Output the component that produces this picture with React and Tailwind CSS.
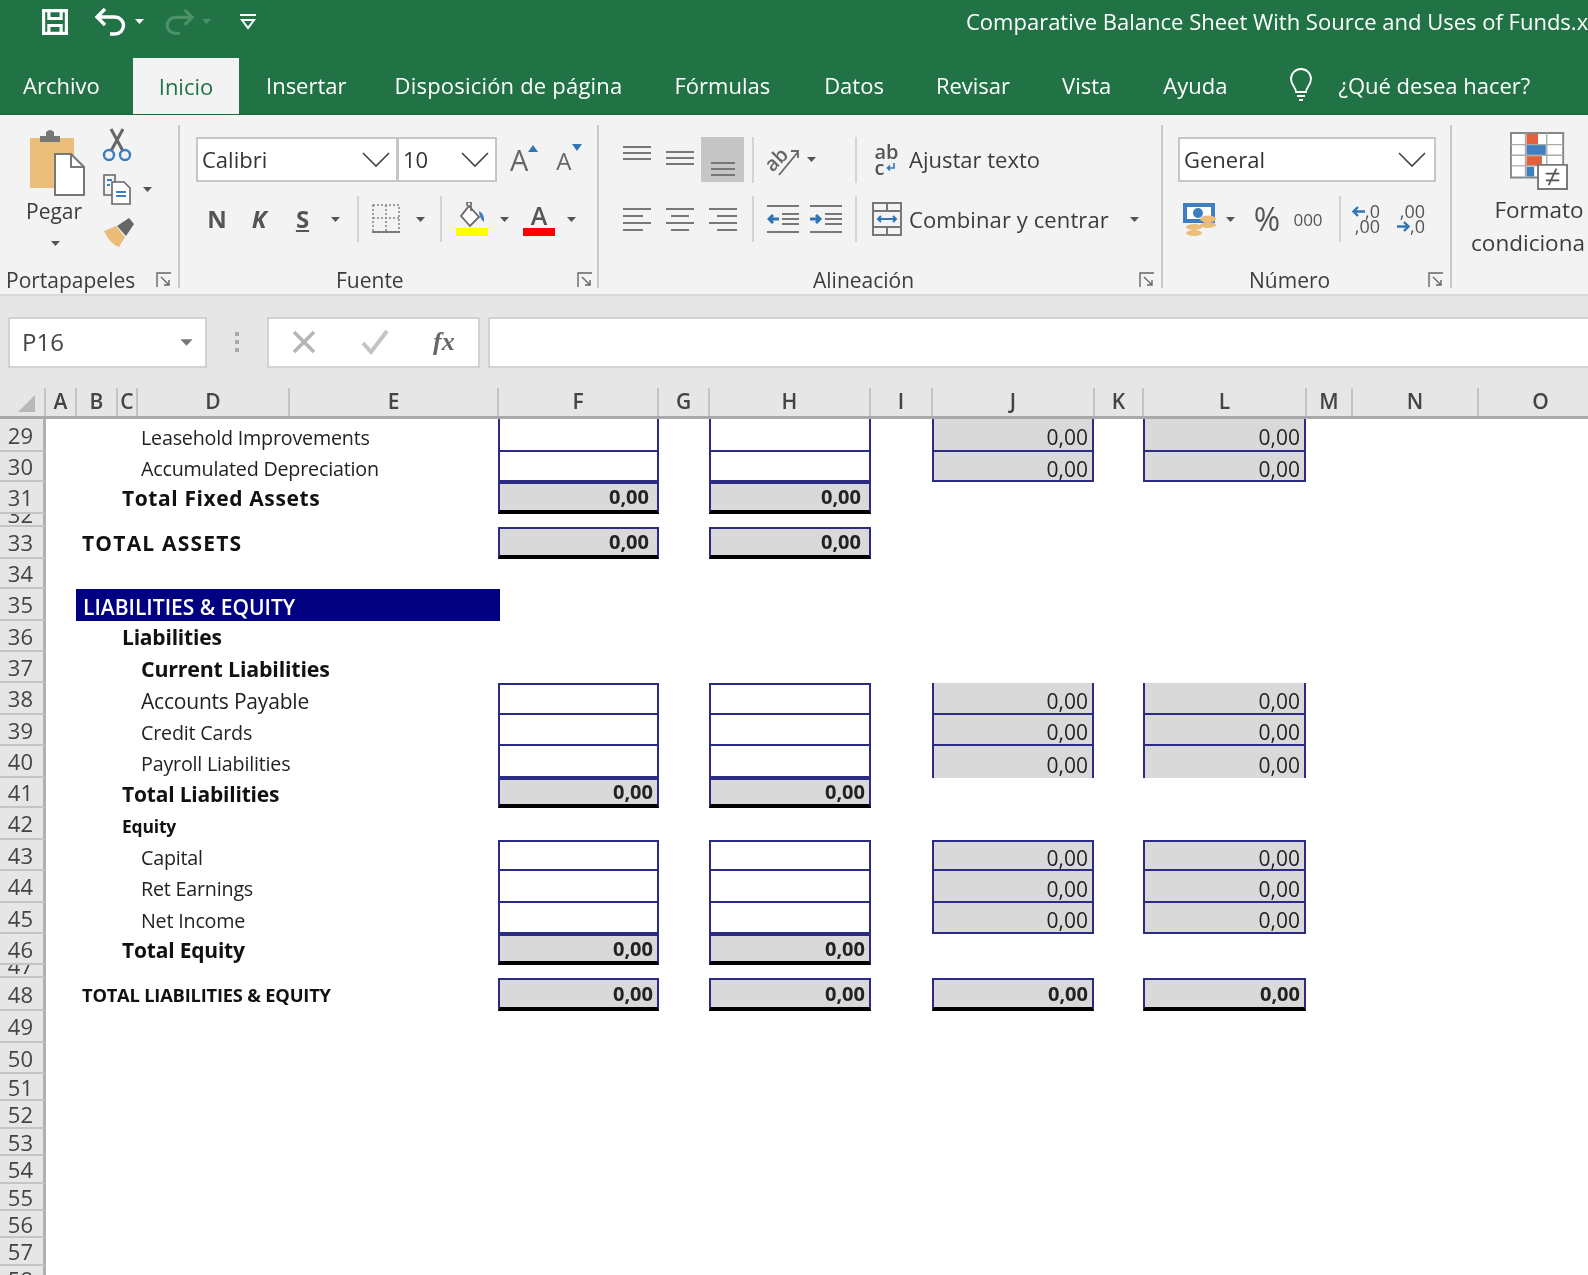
import React from 'react';

const Caret = ({ c = '#555', w = 11, h = 7 }) => (
  <svg width={w} height={h} viewBox="0 0 11 7" preserveAspectRatio="none"><path d="M1 1h9L5.5 6z" fill={c} /></svg>
);
const Chevron = () => (
  <svg width="28" height="16" viewBox="0 0 28 16" fill="none" stroke="#444" strokeWidth="1.6"><path d="M1 1l13 13L27 1" /></svg>
);
const Launcher = () => (
  <svg width="16" height="16" viewBox="0 0 16 16" fill="none" stroke="#666" strokeWidth="1.4">
    <path d="M15 1H1v14" /><path d="M5 5l8 8M13 8v5H8" />
  </svg>
);
const Sep = ({ h = 'h-[46px]' }) => <div className={`w-[2px] bg-[#d4d4d4] ${h}`} />;
const Slot = ({ w, children }) => <div className={`flex justify-center items-center shrink-0 ${w}`}>{children}</div>;

const Lines = ({ rows }) => (
  <svg width="30" height="34" viewBox="0 0 30 34" stroke="#777" strokeWidth="2">
    {rows.map(([x1, x2, y]) => <path key={y} d={`M${x1} ${y}H${x2}`} />)}
  </svg>
);

const PasteIcon = () => (
  <svg width="60" height="68" viewBox="0 0 60 68">
    <path d="M4 10h44v50H4z" fill="#eabd78" />
    <path d="M14 14v-6h6V4q4-4 8 0v4h6v6z" fill="#777" />
    <path d="M29 26h16l13 13v28H29z" fill="#fff" stroke="#777" strokeWidth="2" />
    <path d="M45 26v13h13" fill="none" stroke="#777" strokeWidth="2" />
  </svg>
);
const ScissorsIcon = () => (
  <svg width="30" height="34" viewBox="0 0 30 34" fill="none">
    <path d="M9 1l12 22M21 1L9 23" stroke="#666" strokeWidth="3" />
    <circle cx="7" cy="27" r="5" stroke="#3f7fc0" strokeWidth="2.4" />
    <circle cx="23" cy="27" r="5" stroke="#3f7fc0" strokeWidth="2.4" />
  </svg>
);
const CopyIcon = () => (
  <svg width="30" height="32" viewBox="0 0 30 32" fill="none" stroke="#666" strokeWidth="1.6">
    <path d="M2 2h11v20H2z" fill="#f3f3f3" />
    <path d="M10 9h12l6 6v16H10z" fill="#fff" />
    <path d="M5 7h5M5 12h3M14 19h10M14 23h10" stroke="#3f7fc0" strokeWidth="2" />
  </svg>
);
const BrushIcon = () => (
  <svg width="34" height="32" viewBox="0 0 34 32">
    <path d="M2 15l12-5 9 11-6 10q-9-3-15-16z" fill="#e9bd78" />
    <path d="M15 10l12-8 5 6-8 12z" fill="#666" />
  </svg>
);
const BordersIcon = () => (
  <svg width="28" height="30" viewBox="0 0 28 30" fill="none" stroke="#888" strokeWidth="1.6" strokeDasharray="2 2">
    <path d="M1 1h26v27H1zM14 1v27M1 14h26" />
    <path d="M0 28h28" strokeDasharray="none" stroke="#666" />
  </svg>
);
const FillIcon = () => (
  <div className="flex flex-col items-center w-[32px]">
    <svg width="30" height="26" viewBox="0 0 30 26" fill="none">
      <path d="M12 4l10 11-9 9-9-10z" fill="#fff" stroke="#666" strokeWidth="1.8" />
      <path d="M10 4V0h4v9" stroke="#666" strokeWidth="1.6" />
      <path d="M22 9q6 3 5 11-5-4-5-11z" fill="#3f7fc0" />
    </svg>
    <div className="h-[8px] w-[32px] bg-[#ffff00]" />
  </div>
);
const ColorIcon = () => (
  <div className="flex flex-col items-center w-[32px]">
    <span className="text-[25px] leading-[26px] font-semibold text-[#555]">A</span>
    <div className="h-[8px] w-[32px] bg-[#ff0000]" />
  </div>
);
const OrientIcon = () => (
  <svg width="38" height="36" viewBox="0 0 38 36" fill="none">
    <text x="-1" y="24" fontSize="20" fontFamily="Open Sans" fontWeight="600" fill="#666" transform="rotate(-45 12 16)">ab</text>
    <path d="M15 33L34 10M27 9h7v7" stroke="#666" strokeWidth="1.8" />
  </svg>
);
const Indent = ({ out }) => (
  <svg width="32" height="30" viewBox="0 0 32 30" fill="none">
    <path d="M0 2h32M0 28h32M15 10h17M15 15h17M15 20h17" stroke="#777" strokeWidth="2" />
    {out
      ? <path d="M12 15H2m4-4l-4 4 4 4" stroke="#2f75b5" strokeWidth="3" />
      : <path d="M0 15h10m-4-4l4 4-4 4" stroke="#2f75b5" strokeWidth="3" />}
  </svg>
);
const MergeIcon = () => (
  <svg width="30" height="34" viewBox="0 0 30 34" fill="none" stroke="#777" strokeWidth="2">
    <path d="M1 1h28v32H1zM1 9h28M1 25h28M15 1v8M15 25v8" />
    <path d="M6 17h18" stroke="#2f75b5" />
    <path d="M9 14l-3 3 3 3M21 14l3 3-3 3" stroke="#2f75b5" />
  </svg>
);
const MoneyIcon = () => (
  <svg width="36" height="34" viewBox="0 0 36 34">
    <path d="M1 1h32v20H1z" fill="#3f7fc0" />
    <path d="M5 5h24v12H5z" fill="#fff" />
    <circle cx="16" cy="11" r="5" fill="#3f7fc0" />
    <ellipse cx="26" cy="17" rx="8" ry="3.5" fill="#eabd78" />
    <ellipse cx="26" cy="23" rx="8" ry="3" fill="#eabd78" />
    <ellipse cx="12" cy="25" rx="8" ry="3" fill="#eabd78" />
    <ellipse cx="12" cy="31" rx="8" ry="3" fill="#eabd78" />
  </svg>
);
const CondIcon = () => (
  <svg width="58" height="58" viewBox="0 0 60 60">
    <path d="M1 1h54v46H1z" fill="#fff" stroke="#888" strokeWidth="2" />
    <path d="M17 2h12v11H17z" fill="#e2603a" />
    <path d="M17 13h20v11H17z" fill="#3f7fc0" />
    <path d="M17 25h16v10H17z" fill="#e2603a" />
    <path d="M17 36h8v10H17z" fill="#3f7fc0" />
    <path d="M1 13h54M1 24h54M1 35h54M16 1v46M38 1v46" stroke="#aaa" strokeWidth="1.4" fill="none" />
    <path d="M29 34h30v25H29z" fill="#fff" stroke="#777" strokeWidth="2" />
    <path d="M37 43h14M37 50h14M48 38l-8 17" stroke="#555" strokeWidth="1.8" fill="none" />
  </svg>
);
const ArrowLeft = () => (
  <svg width="13" height="11" viewBox="0 0 13 11" fill="none" stroke="#2f75b5" strokeWidth="2.4"><path d="M13 5.5H2M6 1L1.5 5.5 6 10" /></svg>
);
const ArrowRight = () => (
  <svg width="13" height="11" viewBox="0 0 13 11" fill="none" stroke="#2f75b5" strokeWidth="2.4"><path d="M0 5.5h11M7 1l4.500 4.500L7 10" /></svg>
);

const TABS = [
  ['Insertar', 'pl-[27px] pr-[22px]'],
  ['Disposición de página', 'px-[26px] tracking-[0.2px]'],
  ['Fórmulas', 'pl-[26px] pr-[28px]'],
  ['Datos', 'px-[26px]'],
  ['Revisar', 'px-[26px]'],
  ['Vista', 'px-[26px]'],
  ['Ayuda', 'px-[26px]'],
];

const Field = ({ w, label, pr = 'pr-[6px]' }) => (
  <div className={`flex items-center justify-between bg-white border-2 border-[#c6c6c6] h-[45px] pl-[4px] text-[22px] text-[#333] ${w} ${pr}`}>
    <span>{label}</span>
    <Chevron />
  </div>
);

function GroupSep() {
  return <div className="w-[2px] shrink-0 h-[163px] mt-[10px] bg-[#c8c8c8]" />;
}

function GroupLabel({ text, cls }) {
  return (
    <div className={`flex items-center justify-between h-[28px] ${cls}`}>
      <span className="text-[21px] leading-none">{text}</span>
      <Launcher />
    </div>
  );
}

const Ribbon = () => (
  <div className="flex h-[181px] bg-[#f3f3f3] border-b-2 border-[#d8d8d8] text-[#3c3c3c] text-[21px]">
    {/* Portapapeles */}
    <div className="w-[178px] shrink-0 flex flex-col pt-[13px]">
      <div className="flex h-[137px]">
        <div className="w-[102px] pl-[26px] flex flex-col items-start">
          <PasteIcon />
          <span className="leading-[28px] mt-[1px]">Pegar</span>
          <div className="ml-[24px] mt-[15px]"><Caret /></div>
        </div>
        <div className="flex flex-col gap-[11px] items-start">
          <ScissorsIcon />
          <div className="flex items-center gap-[10px]"><CopyIcon /><Caret /></div>
          <BrushIcon />
        </div>
      </div>
      <GroupLabel cls="mt-auto pl-[6px] pr-[6px]" text="Portapapeles" />
    </div>
    <GroupSep />
    {/* Fuente */}
    <div className="w-[417px] shrink-0 flex flex-col pt-[22px]">
      <div className="flex items-center pl-[16px]">
        <Field w="w-[202px]" label="Calibri" />
        <Field w="w-[100px] -ml-[1px]" label="10" />
        <div className="ml-[13px] flex items-start">
          <span className="text-[29px] leading-[36px] font-medium text-[#666]">A</span>
          <svg width="10" height="7" viewBox="0 0 10 7" className="mt-[3px]"><path d="M0 7h10L5 0z" fill="#2f75b5" /></svg>
        </div>
        <div className="ml-[18px] flex items-start">
          <span className="text-[24px] leading-[36px] font-medium text-[#666] mt-[2px]">A</span>
          <svg width="10" height="7" viewBox="0 0 10 7" className="mt-[3px]"><path d="M0 0h10L5 7z" fill="#2f75b5" /></svg>
        </div>
      </div>
      <div className="flex items-center pl-[16px] mt-[14px] h-[46px] text-[24px] font-bold text-[#555]">
        <Slot w="w-[42px]">N</Slot>
        <Slot w="w-[42px]"><i>K</i></Slot>
        <Slot w="w-[45px]"><u>S</u></Slot>
        <Slot w="w-[20px]"><Caret /></Slot>
        <Slot w="w-[26px]"><Sep /></Slot>
        <Slot w="w-[30px]"><BordersIcon /></Slot>
        <Slot w="w-[38px]"><Caret /></Slot>
        <Slot w="w-[4px]"><Sep /></Slot>
        <Slot w="ml-[8px] w-[41px]"><FillIcon /></Slot>
        <Slot w="w-[24px]"><Caret /></Slot>
        <Slot w="w-[46px]"><ColorIcon /></Slot>
        <Slot w="w-[18px]"><Caret /></Slot>
      </div>
      <GroupLabel cls="mt-auto pl-[156px] pr-[4px]" text="Fuente" />
    </div>
    <GroupSep />
    {/* Alineacion */}
    <div className="w-[562px] shrink-0 flex flex-col pt-[22px]">
      <div className="flex items-center h-[45px] pl-[16px]">
        <Slot w="w-[43px]"><Lines rows={[[1, 29, 4], [1, 29, 10], [1, 29, 16]]} /></Slot>
        <Slot w="w-[43px]"><Lines rows={[[1, 29, 9], [1, 29, 15], [1, 29, 21]]} /></Slot>
        <Slot w="w-[43px] h-[45px] bg-[#c6c6c6]"><Lines rows={[[3, 27, 20], [3, 27, 26], [3, 27, 32]]} /></Slot>
        <Slot w="w-[18px]"><Sep /></Slot>
        <Slot w="w-[42px]"><OrientIcon /></Slot>
        <Slot w="w-[14px]"><Caret /></Slot>
        <Slot w="ml-[31px] w-[14px]"><Sep /></Slot>
        <Slot w="ml-[8px] w-[31px]">
          <div className="flex flex-col items-start text-[#555] text-[20px] leading-[16px] font-semibold">
            <span>ab</span>
            <div className="flex items-center gap-[2px]">
              <span>c</span>
              <svg width="10" height="9" viewBox="0 0 10 9" fill="none" stroke="#2f75b5" strokeWidth="1.6"><path d="M8 0v5H2M4 2.500L1.500 5 4 7.500" /></svg>
            </div>
          </div>
        </Slot>
        <span className="ml-[7px] text-[22px]">Ajustar texto</span>
      </div>
      <div className="flex items-center h-[46px] pl-[16px] mt-[14px]">
        <Slot w="w-[43px]"><Lines rows={[[1, 29, 7], [1, 21, 14], [1, 29, 21], [1, 21, 28]]} /></Slot>
        <Slot w="w-[43px]"><Lines rows={[[1, 29, 7], [6, 24, 14], [1, 29, 21], [6, 24, 28]]} /></Slot>
        <Slot w="w-[43px]"><Lines rows={[[1, 29, 7], [9, 29, 14], [1, 29, 21], [9, 29, 28]]} /></Slot>
        <Slot w="w-[18px]"><Sep /></Slot>
        <Slot w="w-[42px]"><Indent out /></Slot>
        <Slot w="w-[44px]"><Indent /></Slot>
        <Slot w="w-[16px]"><Sep /></Slot>
        <Slot w="ml-[7px] w-[31px]"><MergeIcon /></Slot>
        <span className="ml-[7px] text-[22px] tracking-[0.1px]">Combinar y centrar</span>
        <div className="ml-[20px]"><Caret /></div>
      </div>
      <GroupLabel cls="mt-auto pl-[214px] pr-[6px]" text="Alineación" />
    </div>
    <GroupSep />
    {/* Numero */}
    <div className="w-[287px] shrink-0 flex flex-col pt-[22px]">
      <div className="pl-[15px]"><Field w="w-[258px]" label="General" pr="pr-[8px]" /></div>
      <div className="flex items-center h-[46px] mt-[14px] pl-[18px] text-[#555]">
        <Slot w="w-[38px]"><MoneyIcon /></Slot>
        <Slot w="w-[18px] ml-[2px]"><Caret /></Slot>
        <Slot w="ml-[8px] w-[40px]"><span className="text-[32px] leading-none">%</span></Slot>
        <Slot w="w-[42px]"><span className="text-[17px] leading-none">000</span></Slot>
        <Slot w="w-[22px]"><Sep /></Slot>
        <Slot w="-ml-[4px] w-[38px]">
          <div className="text-[18px] leading-[15px] font-medium text-right">
            <div className="flex items-center justify-end"><ArrowLeft /><span>,0</span></div>
            <div>,00</div>
          </div>
        </Slot>
        <Slot w="ml-[3px] w-[46px]">
          <div className="text-[18px] leading-[15px] font-medium text-right">
            <div>,00</div>
            <div className="flex items-center justify-end"><ArrowRight /><span>,0</span></div>
          </div>
        </Slot>
      </div>
      <GroupLabel cls="mt-auto pl-[86px] pr-[6px]" text="Número" />
    </div>
    <GroupSep />
    {/* Formato */}
    <div className="flex-1 min-w-0 flex flex-col items-center pl-[38px] pt-[17px] overflow-hidden whitespace-nowrap leading-[33px] text-[22.5px]">
      <CondIcon />
      <span className="mt-[3px]">Formato</span>
      <span className="mr-[22px]">condiciona</span>
    </div>
  </div>
);

const FormulaBar = () => (
  <div className="flex items-center h-[92px] bg-[#e6e6e6]">
    <div className="ml-[8px] w-[199px] h-[51px] flex items-center justify-between bg-white border-2 border-[#d2d2d2] pl-[12px] pr-[11px] text-[24px] text-[#444]">
      <span>P16</span>
      <Caret c="#777" w={15} h={9} />
    </div>
    <div className="w-[60px] flex flex-col items-center gap-[4px]">
      <div className="w-[4px] h-[4px] bg-[#aaa]" />
      <div className="w-[4px] h-[4px] bg-[#aaa]" />
      <div className="w-[4px] h-[4px] bg-[#aaa]" />
    </div>
    <div className="w-[213px] h-[51px] flex items-center bg-white border-2 border-[#d2d2d2] pl-[22px]">
      <svg width="26" height="26" viewBox="0 0 26 26" stroke="#b4b4b4" strokeWidth="3.4" fill="none"><path d="M3 3l20 20M23 3L3 23" /></svg>
      <svg width="28" height="26" viewBox="0 0 28 26" stroke="#c4c4c4" strokeWidth="4" fill="none" className="ml-[44px]"><path d="M2 14l8 9L26 2" /></svg>
      <span className="ml-[44px] font-['Liberation_Serif',serif] italic font-bold text-[26px] text-[#666] leading-none">fx</span>
    </div>
    <div className="ml-[8px] flex-1 h-[51px] bg-white border-y-2 border-l-2 border-[#d2d2d2]" />
  </div>
);

const COLS = [
  ['A', 'w-[31px]'], ['B', 'w-[41px]'], ['C', 'w-[20px]'], ['D', 'w-[152px]'], ['E', 'w-[209px]'],
  ['F', 'w-[160px]'], ['G', 'w-[51px]'], ['H', 'w-[161px]'], ['I', 'w-[62px]'], ['J', 'w-[162px]'],
  ['K', 'w-[49px]'], ['L', 'w-[163px]'], ['M', 'w-[46px]'], ['N', 'w-[126px]'], ['O', 'w-[125px]'],
];

const ColumnHeader = () => (
  <div className="flex h-[31px] bg-[#e6e6e6] border-b-[3px] border-[#a9a9a9] text-[21px] font-semibold text-[#444] leading-[27px]">
    <div className="w-[46px] shrink-0 flex items-end justify-end pr-[9px] pb-[4px] border-r-2 border-[#c4c4c4]">
      <svg width="17" height="17" viewBox="0 0 17 17"><path d="M17 0v17H0z" fill="#b8b8b8" /></svg>
    </div>
    {COLS.map(([l, w]) => (
      <div key={l} className={`shrink-0 text-center border-r-2 border-[#c4c4c4] ${w}`}>{l}</div>
    ))}
  </div>
);

const NAVY = 'border-[#2b2b84]';
const INPUT = `bg-white border-x-2 border-b-2 ${NAVY}`;
const INPUT_TOP = `bg-white border-2 ${NAVY}`;
const TOTAL = `bg-[#d9d9d9] border-x-2 border-t-2 ${NAVY} border-b-4 border-b-black`;
const GRAY = `bg-[#d9d9d9] border-x-2 border-b-2 ${NAVY}`;
const GRAY_TOP = `bg-[#d9d9d9] border-2 ${NAVY}`;
const GRAY_OPEN = `bg-[#d9d9d9] border-x-2 ${NAVY}`;

const label = {
  small: 'pl-[95px] pt-[4px] text-[19.7px] font-medium text-[#222]',
  bold: 'pl-[76px] pt-[2px] text-[21px] font-bold text-[#111]',
  bold2: 'pl-[95px] pt-[2px] text-[21.4px] font-bold text-[#111]',
  head: 'pl-[36px] text-[21px] font-bold text-[#111]',
};

const ROWS = [
  { n: 29, h: 'h-[33px]', text: 'Leasehold Improvements', tc: label.small, a: INPUT, b: GRAY },
  { n: 30, h: 'h-[30px]', text: 'Accumulated Depreciation', tc: label.small, a: INPUT, b: GRAY },
  { n: 31, h: 'h-[32px]', text: 'Total Fixed Assets', tc: 'pl-[76px] text-[21px] font-bold text-[#111]', tk: 'tracking-[0.6px]', a: TOTAL, pad: 'pr-[8px]' },
  { n: 32, h: 'h-[13px]', clip: true },
  { n: 33, h: 'h-[32px]', text: 'TOTAL ASSETS', tc: label.head, tk: 'tracking-[1.2px]', a: TOTAL, pad: 'pr-[8px]' },
  { n: 34, h: 'h-[30px]' },
  { n: 35, h: 'h-[32px]', band: 'LIABILITIES & EQUITY' },
  { n: 36, h: 'h-[31px]', text: 'Liabilities', tc: label.bold },
  { n: 37, h: 'h-[31px]', text: 'Current Liabilities', tc: label.bold2 },
  { n: 38, h: 'h-[32px]', text: 'Accounts Payable', tc: 'pl-[95px] pt-[4px] text-[21px] font-medium text-[#222]', a: INPUT_TOP, b: GRAY },
  { n: 39, h: 'h-[31px]', text: 'Credit Cards', tc: label.small, a: INPUT, b: GRAY },
  { n: 40, h: 'h-[32px]', text: 'Payroll Liabilities', tc: label.small, a: INPUT, b: GRAY_OPEN },
  { n: 41, h: 'h-[30px]', text: 'Total Liabilities', tc: label.bold, a: TOTAL },
  { n: 42, h: 'h-[32px]', text: 'Equity', tc: 'pl-[76px] pt-[6px] text-[17.5px] font-bold text-[#111]' },
  { n: 43, h: 'h-[31px]', text: 'Capital', tc: label.small, a: INPUT_TOP, b: GRAY_TOP },
  { n: 44, h: 'h-[32px]', text: 'Ret Earnings', tc: label.small, a: INPUT, b: GRAY },
  { n: 45, h: 'h-[31px]', text: 'Net Income', tc: label.small, a: INPUT, b: GRAY },
  { n: 46, h: 'h-[31px]', text: 'Total Equity', tc: label.bold, a: TOTAL },
  { n: 47, h: 'h-[13px]', clip: true },
  { n: 48, h: 'h-[33px]', text: 'TOTAL LIABILITIES & EQUITY', tc: 'pl-[36px] pt-[2px] text-[18.3px] font-bold text-[#111]', a: TOTAL, b: TOTAL },
  { n: 49, h: 'h-[32px]' },
  { n: 50, h: 'h-[31px]' },
  { n: 51, h: 'h-[27px]' },
  { n: 52, h: 'h-[28px]' },
  { n: 53, h: 'h-[27px]' },
  { n: 54, h: 'h-[28px]' },
  { n: 55, h: 'h-[27px]' },
  { n: 56, h: 'h-[27px]' },
  { n: 57, h: 'h-[28px]' },
  { n: 58, h: 'h-[28px]' },
];

const Box = ({ cls, bold, pad = 'pr-[4px]' }) => (
  <div className={`h-full box-border flex items-center justify-end leading-none text-[#222] ${cls} ${pad} ${bold ? 'text-[20px] font-bold' : 'pt-[6px] text-[21px] font-medium'}`}>
    {cls.includes('d9d9d9') ? '0,00' : ''}
  </div>
);

const SheetRow = ({ r }) => (
  <div className={`flex overflow-hidden ${r.h}`}>
    <div className={`w-[46px] shrink-0 flex justify-end bg-[#e6e6e6] border-r-[3px] border-b-2 border-r-[#b0b0b0] border-b-[#c4c4c4] pr-[10px] text-[22px] text-[#444] ${r.clip ? 'items-end leading-[22px]' : 'items-center leading-none'}`}>
      {r.n}
    </div>
    <div className="w-[452px] shrink-0">
      {r.band ? (
        <div className="h-full ml-[30px] -mr-[2px] bg-[#000080] text-white text-[21px] font-semibold leading-[36px] pl-[7px]">{r.band}</div>
      ) : r.text ? (
        <div className={`h-full flex items-center leading-none whitespace-nowrap ${r.tk || 'tracking-[-0.2px]'} ${r.tc}`}>{r.text}</div>
      ) : null}
    </div>
    <div className="w-[161px] shrink-0">{r.a && <Box cls={r.a} bold pad={r.pad} />}</div>
    <div className="w-[50px] shrink-0" />
    <div className="w-[162px] shrink-0">{r.a && <Box cls={r.a} bold pad={r.pad} />}</div>
    <div className="w-[61px] shrink-0" />
    <div className="w-[162px] shrink-0">{r.b && <Box cls={r.b} bold={r.b === TOTAL} />}</div>
    <div className="w-[49px] shrink-0" />
    <div className="w-[163px] shrink-0">{r.b && <Box cls={r.b} bold={r.b === TOTAL} />}</div>
  </div>
);

export default function App() {
  return (
    <div className="w-[1588px] h-[1275px] overflow-hidden bg-white font-['Open_Sans',sans-serif] blur-[0.5px]">
      {/* title bar */}
      <div className="h-[57px] bg-[#217346] flex items-center text-white pl-[41px] pb-[14px]">
        <svg width="28" height="30" viewBox="0 0 32 32" fill="none" stroke="#fff" strokeWidth="3.6">
          <path d="M3 3h26v26H3z" /><path d="M9 3v9h14V3M9 29v-9h14v9" />
        </svg>
        <svg width="34" height="32" viewBox="0 0 34 32" fill="none" stroke="#fff" strokeWidth="3.4" className="ml-[25px]">
          <path d="M11 3L3 11l8 8M3 11h18a8 8 0 0 1 0 17h-5" />
        </svg>
        <div className="ml-[6px]"><Caret c="#fff" /></div>
        <svg width="32" height="30" viewBox="0 0 34 32" fill="none" stroke="#4e9168" strokeWidth="3.4" className="ml-[18px]">
          <path d="M23 3l8 8-8 8M31 11H13a8 8 0 0 0 0 17h5" />
        </svg>
        <div className="ml-[6px]"><Caret c="#4e9168" /></div>
        <svg width="18" height="18" viewBox="0 0 18 18" fill="none" stroke="#fff" strokeWidth="2" className="ml-[27px]">
          <path d="M1 2h16M3 7h12l-6 8z" />
        </svg>
        <span className="ml-auto w-[622px] shrink-0 whitespace-nowrap overflow-hidden text-[22px]">Comparative Balance Sheet With Source and Uses of Funds.x</span>
      </div>
      {/* tabs */}
      <div className="h-[58px] bg-[#217346] border-b-2 border-[#1b6a3d] flex items-center text-white text-[22px] whitespace-nowrap">
        <div className="w-[133px] pl-[23px]">Archivo</div>
        <div className="w-[106px] h-full -mb-[2px] bg-[#f3f3f3] text-[#217346] flex items-center justify-center">Inicio</div>
        {TABS.map(([t, p]) => <div key={t} className={p}>{t}</div>)}
        <svg width="28" height="34" viewBox="0 0 28 34" fill="none" stroke="#fff" strokeWidth="1.8" className="ml-[34px]">
          <path d="M9 24c0-5-5-7-5-13a10 10 0 0 1 20 0c0 6-5 8-5 13zM10 28h8M12 32h4" />
        </svg>
        <span className="ml-[23px]">¿Qué desea hacer?</span>
      </div>
      <Ribbon />
      <FormulaBar />
      <ColumnHeader />
      {ROWS.map((r) => <SheetRow key={r.n} r={r} />)}
    </div>
  );
}
